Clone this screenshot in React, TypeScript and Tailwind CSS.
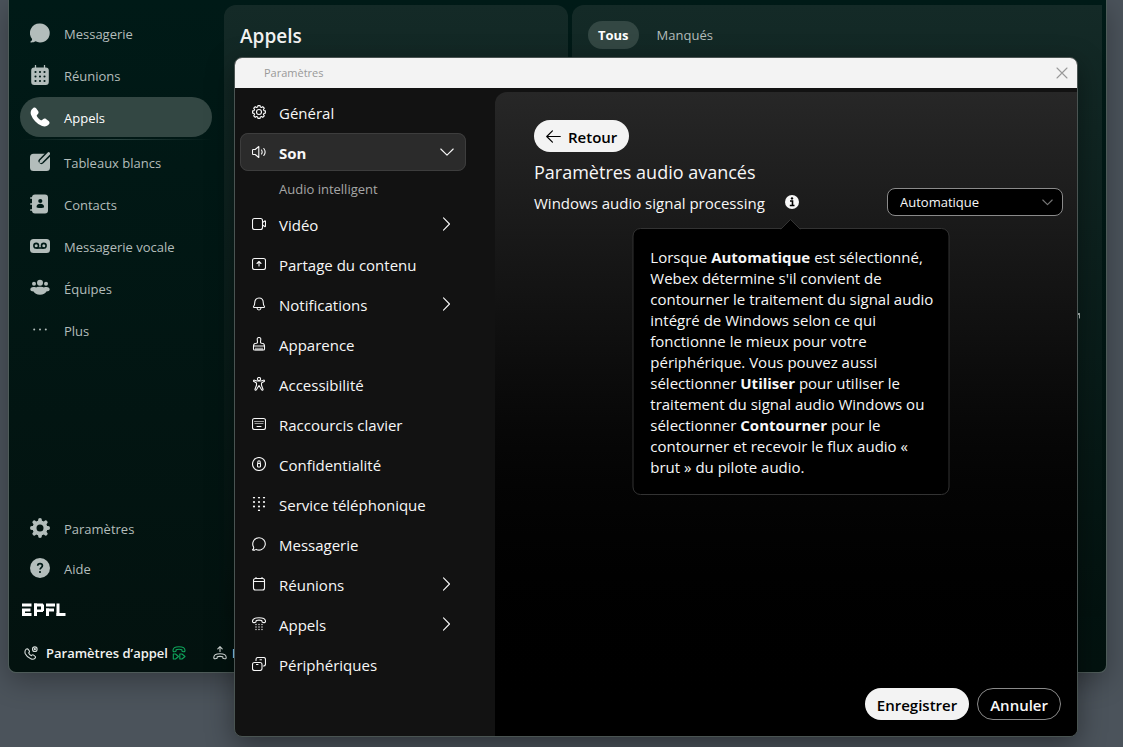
import type { ReactNode } from 'react';

type IconProps = { children: ReactNode; className?: string; box?: string };

function Solid({ children, className = 'size-5', box = '0 0 20 20' }: IconProps) {
  return (
    <svg viewBox={box} fill="currentColor" aria-hidden="true" className={`shrink-0 ${className}`}>
      {children}
    </svg>
  );
}

function Line({ children, className = 'size-[14px]', box = '0 0 14 14' }: IconProps) {
  return (
    <svg
      viewBox={box}
      fill="none"
      stroke="currentColor"
      strokeWidth="1.1"
      strokeLinecap="round"
      strokeLinejoin="round"
      aria-hidden="true"
      className={`shrink-0 ${className}`}
    >
      {children}
    </svg>
  );
}

const dark = '#001a17';

const mainNav = [
  {
    label: 'Messagerie',
    icon: <path d="M10.200.500a9.500 9.500 0 1 1-4.600 17.800C4 19.300 2.200 19.500.800 19.400c-.5 0-.6-.6-.2-.8 1-.7 1.500-1.700 1.500-2.700A9.500 9.500 0 0 1 10.200.500Z" />,
  },
  {
    label: 'Réunions',
    icon: (
      <>
        <path d="M4.200 2.500h11.600a3 3 0 0 1 3 3v11.500a3 3 0 0 1-3 3H4.200a3 3 0 0 1-3-3V5.500a3 3 0 0 1 3-3Z" />
        <path d="M5.500.500v3M14.500.500v3" stroke="currentColor" strokeWidth="1.300" strokeLinecap="round" />
        {[7, 11.5, 16].map((y) => [5.5, 10, 14.5].map((x) => <circle key={`${x}-${y}`} cx={x} cy={y} r="1.050" fill={dark} />))}
      </>
    ),
  },
  {
    label: 'Appels',
    active: true,
    icon: (
      <path d="M3.300.900C4.300.300 5.600.600 6.300 1.500l1.800 2.500c.7 1 .6 2.200-.2 3L7 8c-.3.300-.3.800-.1 1.200 1 1.700 2.300 3 4 4 .4.200.9.200 1.200-.1l.9-.9c.8-.8 2.100-.9 3-.2l2.600 1.900c1 .7 1.200 2.100.5 3.100-1.600 2.300-4.300 3.100-7 2C6.500 16.600 2.800 12.700 1 7.800.1 5.100 1 2.400 3.300.900Z" />
    ),
  },
  {
    label: 'Tableaux blancs',
    icon: (
      <>
        <path d="M3.500 1.800h13A3.500 3.500 0 0 1 20 5.300v10.200a3.500 3.500 0 0 1-3.500 3.500h-13A3.500 3.500 0 0 1 0 15.500V5.300a3.500 3.500 0 0 1 3.500-3.500Z" />
        <path d="M11.500 9 19 1.500" stroke={dark} strokeWidth="6" strokeLinecap="round" />
        <path d="M11.500 9 18.600 1.700" stroke="currentColor" strokeWidth="3" strokeLinecap="round" />
        <path d="m9.300 11.300.7-3.300 2.500 2.500Z" />
      </>
    ),
  },
  {
    label: 'Contacts',
    icon: (
      <>
        <path d="M5 .5h10a3 3 0 0 1 3 3v13a3 3 0 0 1-3 3H5a3 3 0 0 1-3-3v-13a3 3 0 0 1 3-3Z" />
        <path d="M.700 4h3M.700 10h3M.700 16h3" stroke="currentColor" strokeWidth="1.500" strokeLinecap="round" />
        <circle cx="10.300" cy="7" r="2.100" fill={dark} />
        <path d="M6.500 13c0-2.500 1.800-3.200 3.800-3.200s3.800.7 3.800 3.200c0 1.300-7.600 1.300-7.600 0Z" fill={dark} />
      </>
    ),
  },
  {
    label: 'Messagerie vocale',
    icon: (
      <>
        <rect x="0" y="3" width="20" height="14" rx="3.500" />
        <g fill="none" stroke={dark} strokeWidth="1.600">
          <circle cx="6.200" cy="9.700" r="2.300" />
          <circle cx="13.800" cy="9.700" r="2.300" />
          <path d="M6.200 12h7.600" />
        </g>
      </>
    ),
  },
  {
    label: 'Équipes',
    icon: (
      <>
        <circle cx="10" cy="4.800" r="3" />
        <circle cx="4" cy="5.700" r="2" />
        <circle cx="16" cy="5.700" r="2" />
        <path d="M.3 11.500c0-1.600 1.200-2.600 3-2.600h1.500c.6 0 1 .2 1.500.5.900-.4 2-.6 3.700-.6s2.800.2 3.700.6c.5-.3.900-.5 1.500-.5h1.500c1.800 0 3 1 3 2.600 0 1.300-1.300 2-3.300 2-.8 2-3.200 3.200-6.400 3.200s-5.600-1.200-6.400-3.200c-2 0-3.300-.7-3.300-2Z" />
      </>
    ),
  },
  {
    label: 'Plus',
    icon: (
      <>
        <circle cx="4.200" cy="9.500" r="1" />
        <circle cx="10" cy="9.500" r="1" />
        <circle cx="15.800" cy="9.500" r="1" />
      </>
    ),
  },
];

function MainItem({ label, icon, active }: { label: string; icon: ReactNode; active?: boolean }) {
  return (
    <button
      type="button"
      className={`flex h-10 w-full shrink-0 items-center gap-[14px] rounded-full pl-[10px] text-left text-[13px] ${
        active ? 'bg-[#334743] text-white' : 'text-[#b3bdbb]'
      }`}
    >
      <Solid>{icon}</Solid>
      <span className="pt-[3px]">{label}</span>
    </button>
  );
}

// Outline of a wheel with eight teeth, centred on (7, 7).
const gear = `M${Array.from({ length: 8 }, (_, tooth) =>
  [
    [-0.27, 5.1],
    [-0.17, 6.5],
    [0.17, 6.5],
    [0.27, 5.1],
  ]
    .map(([turn, radius]) => {
      const angle = (tooth * Math.PI) / 4 + turn;
      return `${(7 + radius * Math.sin(angle)).toFixed(2)} ${(7 - radius * Math.cos(angle)).toFixed(2)}`;
    })
    .join('L'),
).join('L')}Z`;

type Setting = { label: string; icon: ReactNode; more?: boolean; open?: boolean };

const settings: Setting[] = [
  {
    label: 'Général',
    icon: (
      <>
        <path d={gear} />
        <circle cx="7" cy="7" r="2.500" />
      </>
    ),
  },
  {
    label: 'Son',
    open: true,
    icon: (
      <>
        <path d="M.5 5.200v3.600c0 .4.300.7.700.7h2l3.600 3V1.500l-3.600 3h-2c-.4 0-.7.300-.7.700Z" />
        <path d="M9.500 5c.8 1.200.8 2.800 0 4M11.800 3.500c1.600 2.100 1.600 4.900 0 7" />
      </>
    ),
  },
  {
    label: 'Vidéo',
    more: true,
    icon: (
      <>
        <rect x=".5" y="1.500" width="10" height="11" rx="2" />
        <path d="m10.500 5.500 2.300-1.500c.3-.2.700 0 .7.400v4.700c0 .4-.4.600-.7.400L10.500 8" />
      </>
    ),
  },
  {
    label: 'Partage du contenu',
    icon: (
      <>
        <rect x=".5" y="1.500" width="13" height="11" rx="2" />
        <path d="M7 9V5M5 6.500l2-2 2 2" />
      </>
    ),
  },
  {
    label: 'Notifications',
    more: true,
    icon: (
      <>
        <path d="M2 10.500c-.5 0-.7-.6-.4-1 .8-.9 1.100-1.500 1.100-3.500C2.700 3.200 4.200 1 7 1s4.300 2.200 4.300 5c0 2 .3 2.600 1.100 3.500.3.400.1 1-.4 1H2Z" />
        <path d="M5 11c.2 1.300 1 2 2 2s1.800-.7 2-2" />
      </>
    ),
  },
  {
    label: 'Apparence',
    icon: (
      <>
        <path d="M1.500 9c0-1.800.8-2.600 2.500-2.700 1.200-.1 1.600-.5 1.500-1.500L5.200 2c-.1-2 3.700-2 3.600 0l-.3 2.800c-.1 1 .3 1.400 1.500 1.500 1.700.1 2.500.9 2.500 2.700H1.500ZM1.500 9v3c0 .6.400 1 1 1h9c.6 0 1-.4 1-1V9" />
        <path d="M4 11v2M6 11v2M8 11v2M10 11v2" />
      </>
    ),
  },
  {
    label: 'Accessibilité',
    icon: (
      <>
        <circle cx="7" cy="2" r="1.600" />
        <path d="M5 4 2.500 3.200c-1-.2-1.400 1-.5 1.400l2.500 1.300v2.300L3 12.300c-.2.900.9 1.300 1.400.5L7 8.500l2.600 4.300c.5.800 1.600.4 1.400-.5L9.500 8.200V5.900L12 4.600c.9-.4.500-1.600-.5-1.400L9 4H5Z" />
      </>
    ),
  },
  {
    label: 'Raccourcis clavier',
    icon: (
      <>
        <rect x=".5" y="1.500" width="13" height="11" rx="2" />
        <path d="M2.500 4.500h9M3 6.500h8" strokeOpacity=".6" />
        <path d="M5 9.500h4" />
      </>
    ),
  },
  {
    label: 'Confidentialité',
    icon: (
      <>
        <circle cx="7" cy="7" r="6.500" />
        <rect x="5.500" y="6.500" width="3" height="3.500" rx=".8" />
        <path d="M5.800 6.500V5c0-1.600 2.400-1.600 2.400 0v1.500" />
      </>
    ),
  },
  {
    label: 'Service téléphonique',
    icon: (
      <g fill="currentColor" stroke="none">
        {[0, 4.500, 9].map((y) => [2, 7, 12].map((x) => <circle key={`${x}-${y}`} cx={x} cy={y + 0.500} r="1.100" />))}
        <circle cx="7" cy="13.500" r="1.100" />
      </g>
    ),
  },
  {
    label: 'Messagerie',
    icon: <path d="M7.200.700a6.200 6.200 0 1 1-3 11.700c-1 .7-2.200.8-3.200.7-.4 0-.5-.4-.2-.6.900-.6 1-1.500.8-2.500A6.200 6.200 0 0 1 7.200.700Z" />,
  },
  {
    label: 'Réunions',
    more: true,
    icon: (
      <>
        <rect x="1.500" y="1.500" width="11" height="11.500" rx="2" />
        <path d="M1.500 4.500h11M4 .5v1M10 .5v1" />
      </>
    ),
  },
  {
    label: 'Appels',
    more: true,
    icon: (
      <>
        <path d="M.5 4.300C.5 1.800 3 .700 7 .700s6.500 1.100 6.500 3.600c0 1-.6 1.500-1.500 1.300l-1.200-.2c-.7-.2-1-.6-1-1.300V3.500c-1.800-.5-3.800-.5-5.600 0v.6c0 .7-.3 1.100-1 1.300L2 5.600c-.9.200-1.500-.3-1.500-1.300Z" />
        <path d="M4 7.500h.01M7 7.500h.01M10 7.500h.01M4 10h.01M7 10h.01M10 10h.01M4 12.500h.01M7 12.500h.01M10 12.500h.01" strokeWidth="1.300" />
      </>
    ),
  },
  {
    label: 'Périphériques',
    icon: (
      <>
        <rect x=".5" y="5.500" width="9.500" height="8" rx="2" />
        <path d="M4 3.500V2.500c0-1.100.9-2 2-2h5.500c1.100 0 2 .9 2 2V7c0 1.100-.9 2-2 2M4.500 7.500h1.500M8 2.700h1.500" />
      </>
    ),
  },
];

function SettingsItem({ item }: { item: Setting }) {
  return (
    <li>
      <button
        type="button"
        className={`flex w-full items-center rounded-lg px-3 text-left text-[15px] text-[#f7f7f7] ${
          item.open ? 'mb-0.5 h-[38px] bg-[#2b2b2b] font-bold outline outline-offset-[-1px] outline-[#3d3d3d]' : 'h-10 pb-0.5'
        }`}
      >
        <Line>{item.icon}</Line>
        <span className="ml-[13px] grow pt-0.5">{item.label}</span>
        {item.more && (
          <Line className="mr-px size-[14px]">
            <path d="m4.500.800 6 6.200-6 6.200" />
          </Line>
        )}
        {item.open && (
          <Line className="size-[14px]">
            <path d="M.8 4 7 10.200 13.200 4" />
          </Line>
        )}
      </button>
      {item.open && (
        <button type="button" className="flex h-8 w-full items-center pl-[39px] pt-0.5 text-[13px] text-[#a6a6a6]">
          Audio intelligent
        </button>
      )}
    </li>
  );
}

function AudioTooltip() {
  return (
    <div
      role="tooltip"
      id="audio-help"
      className="absolute left-[6px] top-[33px] w-[317px] -translate-x-1/2 rounded-lg border border-[#333] bg-black px-[17px] pb-4 pt-[18px] text-[15px] leading-[21px] whitespace-nowrap text-[#f7f7f7]"
    >
      <svg viewBox="0 0 20 11" aria-hidden="true" className="absolute -top-[10px] left-1/2 h-[11px] w-5 -translate-x-1/2">
        <path d="M0 10.500 10 .5l10 10V11H0Z" fill="#000" />
        <path d="M0 10.500 10 .5l10 10" fill="none" stroke="#333" />
      </svg>
      Lorsque <b>Automatique</b> est sélectionné,
      <br />
      Webex détermine s'il convient de
      <br />
      contourner le traitement du signal audio
      <br />
      intégré de Windows selon ce qui
      <br />
      fonctionne le mieux pour votre
      <br />
      périphérique. Vous pouvez aussi
      <br />
      sélectionner <b>Utiliser</b> pour utiliser le
      <br />
      traitement du signal audio Windows ou
      <br />
      sélectionner <b>Contourner</b> pour le
      <br />
      contourner et recevoir le flux audio «
      <br />
      brut » du pilote audio.
    </div>
  );
}

function SettingsDialog() {
  return (
    <section
      role="dialog"
      aria-label="Paramètres"
      className="absolute left-[234px] right-[45px] top-[57px] flex flex-col overflow-hidden rounded-lg border border-[#4a5452] bg-[#121212] shadow-[0_8px_28px_rgba(0,0,0,0.4)]"
    >
      <header className="flex h-[30px] items-center justify-between bg-[#f3f3f3] pl-[29px] pr-[9px] text-[#999]">
        <h2 className="text-[11px]">Paramètres</h2>
        <button type="button" aria-label="Fermer">
          <Line className="size-3" box="0 0 12 12">
            <path d="m1 1 10 10M11 1 1 11" />
          </Line>
        </button>
      </header>
      <div className="flex grow">
        <nav className="w-[260px] shrink-0 pb-[51px] pl-[5px] pr-[29px] pt-[5px]">
          <ul>
            {settings.map((item) => (
              <SettingsItem key={item.label} item={item} />
            ))}
          </ul>
        </nav>
        <form className="mt-1 flex grow flex-col rounded-tl-xl bg-linear-to-b from-[#272727] to-black pb-4 pl-[39px] pr-[14px] pt-7 text-[#f7f7f7]">
          <button
            type="button"
            className="flex h-8 items-center gap-[7px] self-start rounded-full bg-[#f3f3f3] px-3 text-[15px] font-semibold text-black"
          >
            <Line className="size-[15px]">
              <path d="M.700 7h12.600M6 1.700.700 7 6 12.300" />
            </Line>
            <span className="pt-0.5">Retour</span>
          </button>
          <h3 className="mt-[6px] text-[18px] leading-7">Paramètres audio avancés</h3>
          <div className="mt-0.5 flex h-7 items-center">
            <label htmlFor="signal" className="pt-0.5 text-[15px]">
              Windows audio signal processing
            </label>
            <span className="relative ml-5 block">
              <button type="button" aria-label="Aide audio" aria-describedby="audio-help" className="block">
                <Solid className="size-[14px]" box="0 0 14 14">
                  <circle cx="7" cy="7" r="7" />
                  <path d="M5 6h2.500v4.500M4.800 10.500h4.700" stroke="#000" strokeWidth="1.600" fill="none" />
                  <circle cx="7" cy="3.400" r="1.200" fill="#000" />
                </Solid>
              </button>
              <AudioTooltip />
            </span>
            <span className="relative ml-auto w-44">
              <select
                id="signal"
                className="h-7 w-full appearance-none rounded-lg border border-[#8a8a8a] bg-black pl-3 pt-0.5 text-[13px] text-[#f7f7f7]"
              >
                <option>Automatique</option>
              </select>
              <Line className="pointer-events-none absolute right-[10px] top-[9px] size-[11px] text-[#777]" box="0 0 11 11">
                <path d="m.8 3 4.700 4.700L10.200 3" />
              </Line>
            </span>
          </div>
          <div className="mr-0.5 mt-auto flex justify-end gap-2 text-[15px] font-semibold">
            <button type="submit" className="h-8 rounded-full bg-[#f3f3f3] px-3 pt-0.5 text-black">
              Enregistrer
            </button>
            <button type="button" className="h-8 rounded-full border border-[#8a8a8a] px-3 pt-0.5">
              Annuler
            </button>
          </div>
        </form>
      </div>
    </section>
  );
}

export default function App() {
  return (
    <div className="relative min-h-screen overflow-hidden bg-[#4b535b] pl-2 pr-4 font-['Open_Sans','Noto_Sans',sans-serif]">
      <main className="flex h-[calc(100vh-74px)] min-h-[600px] flex-col overflow-hidden rounded-b-lg border border-t-0 border-[#4e5b59] bg-linear-to-b from-[#001a17] to-[#03120f] shadow-[0_8px_28px_rgba(0,0,0,0.3)]">
        <div className="flex grow">
          <aside className="flex w-[215px] shrink-0 flex-col pl-[11px] pr-3 pt-[13px]">
            <nav className="flex flex-col gap-0.5">
              {mainNav.slice(0, 3).map((item) => (
                <MainItem key={item.label} {...item} />
              ))}
              <hr className="h-px border-0 bg-linear-to-r from-transparent via-[#2c4541] to-transparent" />
              {mainNav.slice(3).map((item) => (
                <MainItem key={item.label} {...item} />
              ))}
            </nav>
            <div className="mt-auto">
              <MainItem
                label="Paramètres"
                icon={
                  <>
                    <circle cx="10" cy="10" r="5.500" fill="none" stroke="currentColor" strokeWidth="4" />
                    <g stroke="currentColor" strokeWidth="3.800" strokeLinecap="round">
                      {[0, 45, 90, 135, 180, 225, 270, 315].map((a) => (
                        <path key={a} d="M10 3.500V1.900" transform={`rotate(${a} 10 10)`} />
                      ))}
                    </g>
                  </>
                }
              />
              <MainItem
                label="Aide"
                icon={
                  <>
                    <circle cx="10" cy="10" r="10" />
                    <path d="M7.700 7.800c0-3 4.700-2.900 4.700-.1 0 1.900-2.300 1.800-2.300 3.800" fill="none" stroke={dark} strokeWidth="1.700" />
                    <circle cx="10" cy="14" r="1.100" fill={dark} />
                  </>
                }
              />
            </div>
            <svg viewBox="0 0 44 14" role="img" aria-label="EPFL" fill="#fff" className="ml-0.5 mt-[15px] h-[14px] w-11">
              <rect x="0" y=".5" width="9.500" height="3" />
              <rect x="0" y="5.500" width="8.500" height="3" />
              <rect x="0" y="7" width="3" height="4" />
              <rect x="0" y="10" width="9.500" height="3" />
              <rect x="12" y=".5" width="3" height="12.500" />
              <rect x="12" y=".5" width="9" height="3" />
              <rect x="19" y="1.500" width="3" height="6.500" />
              <rect x="12" y="6.500" width="9" height="2.500" />
              <rect x="24" y=".5" width="9" height="3" />
              <rect x="24" y="5.500" width="8" height="3" />
              <rect x="24" y="5.500" width="3" height="7.500" />
              <rect x="34.500" y=".5" width="3" height="12.500" />
              <rect x="34.500" y="10" width="9" height="3" />
            </svg>
          </aside>
          <section className="mr-1 mt-[5px] w-[344px] shrink-0 rounded-t-xl bg-linear-to-b from-[#142a27] to-[#03120f] px-4 pt-4">
            <h1 className="text-[19px] leading-[30px] font-semibold text-[#f2f2f2]">Appels</h1>
          </section>
          <section className="mr-1 mt-[5px] grow rounded-tl-xl bg-linear-to-b from-[#142a27] to-[#03120f] pl-4 pr-[22px] pt-4">
            <div className="flex items-center gap-[18px] text-[13px]">
              <button type="button" className="h-7 rounded-full bg-[#334743] px-[10px] pt-0.5 font-bold text-white">
                Tous
              </button>
              <button type="button" className="pt-0.5 text-[#b3bdbb]">
                Manqués
              </button>
            </div>
            <button type="button" aria-label="Ouvrir" className="ml-auto mt-[264px] block text-[#b3bdbb]">
              <Line className="size-3" box="0 0 12 12">
                <path d="M7 .5h4.500V5M11.500.500 5 7M8.500 9v1c0 .8-.7 1.500-1.500 1.500H2" />
              </Line>
            </button>
          </section>
        </div>
        <footer className="flex h-[55px] items-center pl-[15px] pt-4 text-[13px] font-semibold text-[#f2f2f2]">
          <button type="button" className="flex items-center">
            <Line className="size-[14px] text-[#d5dbd9]">
              <path d="M2.200 3.200c.7-.6 1.500-.4 2 .2l1 1.400c.4.600.3 1.200-.1 1.700l-.4.400c.6 1.300 1.500 2.200 2.700 2.800l.5-.5c.5-.5 1.200-.5 1.700-.1l1.300 1c.7.500.8 1.400.2 2-1.200 1.400-2.600 1.500-4.300.7A10.500 10.500 0 0 1 1.300 7.700C.6 5.900.9 4.400 2.200 3.200Z" />
              <circle cx="10.800" cy="3.200" r="2.300" />
              <circle cx="10.800" cy="3.200" r=".6" />
            </Line>
            <span className="ml-2 mr-1 pt-0.5">Paramètres d’appel</span>
            <Line className="size-[14px] text-[#0fa35b]">
              <path d="M1 4.500C1 2 3.500.800 7 .800S13 2 13 4.500c0 .9-.4 1.300-1.300 1.200l-1-.2c-.6-.1-.8-.5-.8-1.100v-.6c-1.800-.7-4-.7-5.800 0v.6c0 .6-.2 1-.8 1.100l-1 .2C1.400 5.800 1 5.400 1 4.500Z" />
              <path d="M1.300 8v5h2.200l3-2.500-3-2.500H1.300ZM7.800 8v5H10l3-2.500L10 8H7.800Z" />
            </Line>
          </button>
          <button type="button" className="ml-[27px] flex items-center gap-[5px]">
            <Line className="size-[14px] text-[#d5dbd9]">
              <path d="M.8 11.500C.8 9 3.500 7.800 7 7.800s6.200 1.200 6.200 3.700c0 .9-.4 1.400-1.300 1.200l-1.300-.2c-.6-.1-.8-.5-.8-1.100v-.6c-1.800-.6-3.800-.6-5.600 0v.6c0 .6-.2 1-.8 1.100l-1.300.2c-.9.200-1.300-.3-1.300-1.200ZM7 5.500V.800M4.800 2.800 7 .700l2.200 2.100" />
            </Line>
            <span className="pt-0.5">R</span>
          </button>
        </footer>
      </main>
      <SettingsDialog />
    </div>
  );
}
